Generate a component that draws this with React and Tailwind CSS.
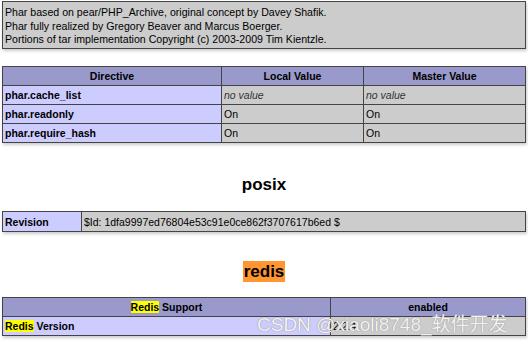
import React from "react";

const F = { fontFamily: '"Liberation Sans", Arial, sans-serif' };

function Cell({ className = "", children }) {
  return <div className={"flex items-center px-[2px] text-[10.5px] leading-[12px] text-black whitespace-nowrap " + className}>{children}</div>;
}

const Hl = ({ children }) => <span className="bg-[#ffff00]">{children}</span>;

export default function App() {
  return (
    <div className="relative w-[528px] h-[343px] bg-white overflow-hidden" style={F}>
      <div className="ml-[2px] mt-[1px] w-[524px]">
        {/* top info box */}
        <div className="border border-[#444] bg-[#cccccc] h-[48px] px-[2px] pt-[4px] text-[10.6px] leading-[13.5px] text-black shadow-[1px_2px_3px_#ccc]">
          <div>Phar based on pear/PHP_Archive, original concept by Davey Shafik.</div>
          <div>Phar fully realized by Gregory Beaver and Marcus Boerger.</div>
          <div>Portions of tar implementation Copyright (c) 2003-2009 Tim Kientzle.</div>
        </div>

        {/* directive table */}
        <div className="mt-[17px] grid grid-cols-[218px_141px_161px] auto-rows-[18px] gap-px p-px bg-[#444] shadow-[1px_2px_3px_#ccc]">
          <Cell className="bg-[#9999cc] justify-center font-bold">Directive</Cell>
          <Cell className="bg-[#9999cc] justify-center font-bold">Local Value</Cell>
          <Cell className="bg-[#9999cc] justify-center font-bold">Master Value</Cell>

          <Cell className="bg-[#ccccff] font-bold">phar.cache_list</Cell>
          <Cell className="bg-[#cccccc]"><i className="text-[#333]">no value</i></Cell>
          <Cell className="bg-[#cccccc]"><i className="text-[#333]">no value</i></Cell>

          <Cell className="bg-[#ccccff] font-bold">phar.readonly</Cell>
          <Cell className="bg-[#cccccc]">On</Cell>
          <Cell className="bg-[#cccccc]">On</Cell>

          <Cell className="bg-[#ccccff] font-bold">phar.require_hash</Cell>
          <Cell className="bg-[#cccccc]">On</Cell>
          <Cell className="bg-[#cccccc]">On</Cell>
        </div>

        {/* posix */}
        <div className="mt-[32px] mb-[16px] h-[20px] flex items-center justify-center text-[17px] font-bold leading-[20px] text-black">
          posix
        </div>
        <div className="grid grid-cols-[78px_443px] auto-rows-[19px] gap-px p-px bg-[#444] shadow-[1px_2px_3px_#ccc]">
          <Cell className="bg-[#ccccff] font-bold">Revision</Cell>
          <Cell className="bg-[#cccccc]">$Id: 1dfa9997ed76804e53c91e0ce862f3707617b6ed $</Cell>
        </div>

        {/* redis */}
        <div className="mt-[29px] mb-[15px] h-[21px] flex items-center justify-center">
          <span className="bg-[#ff9632] px-[1px] text-[17px] font-bold leading-[21px] text-black">redis</span>
        </div>
        <div className="grid grid-cols-[327px_194px] auto-rows-[18px] gap-px p-px bg-[#444] shadow-[1px_2px_3px_#ccc]">
          <Cell className="bg-[#9999cc] justify-center font-bold"><Hl>Redis</Hl>&nbsp;Support</Cell>
          <Cell className="bg-[#9999cc] justify-center font-bold">enabled</Cell>
          <Cell className="bg-[#ccccff] font-bold"><Hl>Redis</Hl>&nbsp;Version</Cell>
          <Cell className="bg-[#cccccc]">2.2.4</Cell>
        </div>
      </div>

      {/* watermark */}
      <div
        className="absolute left-[257px] top-[313px] text-[19px] leading-[24px] text-[#f2f2f2] whitespace-nowrap"
        style={{
          fontFamily: '"Liberation Sans", "Noto Sans CJK SC", sans-serif',
          textShadow: "0 0 1px #999, 0 0 1px #999",
        }}
      >
        CSDN @xiaoli8748_软件开发
      </div>
    </div>
  );
}
